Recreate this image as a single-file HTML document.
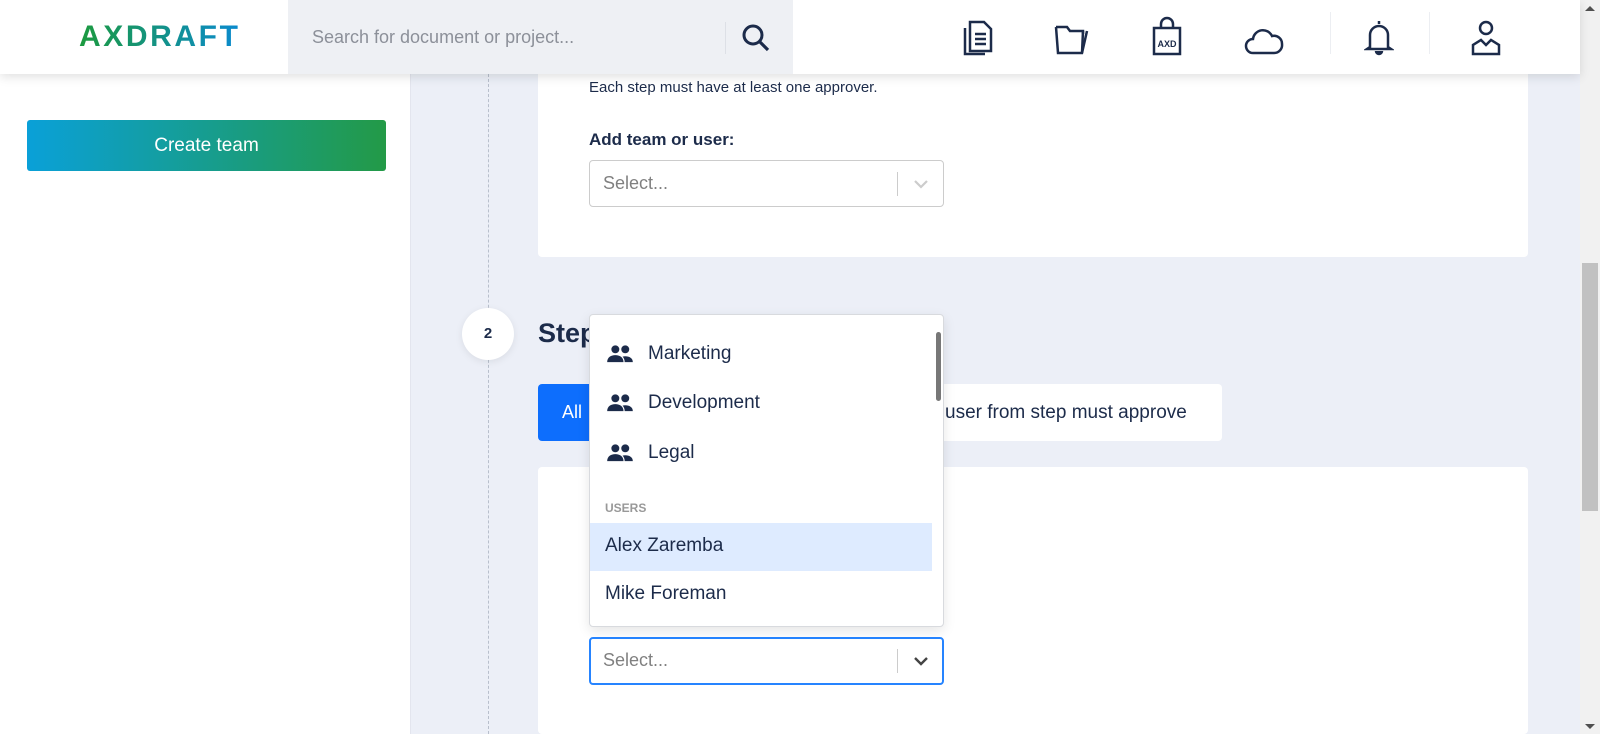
<!DOCTYPE html>
<html><head><meta charset="utf-8"><style>
*{box-sizing:border-box;margin:0;padding:0}
body{width:1600px;height:734px;overflow:hidden;background:#eceff7;font-family:"Liberation Sans",Arial,sans-serif;color:#1c2b4a;position:relative}
.abs{position:absolute}
.header{left:0;top:0;width:1580px;height:74px;background:#fff;box-shadow:0 3px 10px rgba(0,0,0,.12);z-index:5}
.logo{left:79px;top:20px;font-size:30px;font-weight:bold;letter-spacing:2.6px;background:linear-gradient(90deg,#1c9a3e,#0a8ad0);-webkit-background-clip:text;color:transparent}
.search{left:288px;top:0;width:505px;height:74px;background:#eef0f4}
.search span{position:absolute;left:24px;top:27px;font-size:18px;color:#8c9099}
.sidebar{left:0;top:0;width:411px;height:734px;background:#fff;border-right:1px solid #e3e5ee}
.btn{left:27px;top:120px;width:359px;height:51px;border-radius:3px;background:linear-gradient(90deg,#0aa0d8,#239a47);color:#fff;font-size:19px;text-align:center;line-height:51px}
.card{background:#fff;border-radius:4px}
.sel{background:#fff;border:1px solid #ccc;border-radius:4px}
.sel .ph{position:absolute;left:13px;top:12px;font-size:18px;color:#808080}
.sel .div{position:absolute;right:45px;top:11px;width:1px;height:24px;background:#ccc}
.item{position:absolute;left:0;width:100%;font-size:19px;color:#1c2b4a}
</style></head><body>
<div class="abs sidebar"></div>
<div class="abs btn">Create team</div>
<div class="abs" style="left:488px;top:74px;height:660px;border-left:1px dashed #b8bfcc"></div>

<div class="abs card" style="left:538px;top:60px;width:990px;height:197px"></div>
<div class="abs" style="left:589px;top:79px;font-size:15px;color:#1c2b4a">Each step must have at least one approver.</div>
<div class="abs" style="left:589px;top:130px;font-size:17px;font-weight:bold;color:#1c2b4a">Add team or user:</div>
<div class="abs sel" style="left:589px;top:160px;width:355px;height:47px"><span class="ph">Select...</span><span class="div"></span>
<svg class="abs" style="right:13px;top:16px" width="18" height="14" viewBox="0 0 18 14"><path d="M3 4l6 6 6-6" fill="none" stroke="#ccc" stroke-width="2.2"/></svg></div>

<div class="abs" style="left:462px;top:308px;width:52px;height:52px;border-radius:50%;background:#fff;box-shadow:0 2px 8px rgba(0,0,0,.08);text-align:center;line-height:52px;font-size:15px;font-weight:bold">2</div>
<div class="abs" style="left:538px;top:318px;font-size:27px;font-weight:bold">Step</div>
<div class="abs" style="left:538px;top:384px;width:684px;height:57px;background:#fff;border-radius:4px"></div>
<div class="abs" style="left:538px;top:384px;width:230px;height:57px;background:#0d6efd;border-radius:4px 0 0 4px;color:#fff;font-size:18px;line-height:57px;padding-left:24px">All</div>
<div class="abs" style="left:945px;top:402px;font-size:19px">user from step must approve</div>

<div class="abs card" style="left:538px;top:467px;width:990px;height:267px"></div>

<div class="abs" style="left:589px;top:314px;width:355px;height:313px;background:#fff;border:1px solid #d8dade;border-radius:4px;box-shadow:0 4px 12px rgba(0,0,0,.1)">
<div class="abs" style="right:2px;top:17px;width:5px;height:69px;background:#777;border-radius:3px"></div>
<div class="item" style="top:28px"><svg class="abs" style="left:16px;top:1px" width="28" height="20" viewBox="0 0 24 16"><circle cx="8" cy="4" r="3.4" fill="#1c2b4a"/><circle cx="16.5" cy="4" r="3.4" fill="#1c2b4a"/><path d="M1 15c0-4 3-6 7-6s7 2 7 6z" fill="#1c2b4a"/><path d="M16 15c0-2-.6-3.6-1.8-4.8 .7-.2 1.5-.3 2.3-.3 3.5 0 6.5 1.6 6.5 5.1z" fill="#1c2b4a"/></svg><span style="position:absolute;left:58px">Marketing</span></div>
<div class="item" style="top:77px"><svg class="abs" style="left:16px;top:1px" width="28" height="20" viewBox="0 0 24 16"><circle cx="8" cy="4" r="3.4" fill="#1c2b4a"/><circle cx="16.5" cy="4" r="3.4" fill="#1c2b4a"/><path d="M1 15c0-4 3-6 7-6s7 2 7 6z" fill="#1c2b4a"/><path d="M16 15c0-2-.6-3.6-1.8-4.8 .7-.2 1.5-.3 2.3-.3 3.5 0 6.5 1.6 6.5 5.1z" fill="#1c2b4a"/></svg><span style="position:absolute;left:58px">Development</span></div>
<div class="item" style="top:127px"><svg class="abs" style="left:16px;top:1px" width="28" height="20" viewBox="0 0 24 16"><circle cx="8" cy="4" r="3.4" fill="#1c2b4a"/><circle cx="16.5" cy="4" r="3.4" fill="#1c2b4a"/><path d="M1 15c0-4 3-6 7-6s7 2 7 6z" fill="#1c2b4a"/><path d="M16 15c0-2-.6-3.6-1.8-4.8 .7-.2 1.5-.3 2.3-.3 3.5 0 6.5 1.6 6.5 5.1z" fill="#1c2b4a"/></svg><span style="position:absolute;left:58px">Legal</span></div>
<div class="abs" style="left:15px;top:186px;font-size:12px;font-weight:bold;color:#999">USERS</div>
<div class="abs" style="left:0;top:208px;width:342px;height:48px;background:#deebff"></div>
<div class="item" style="top:220px;left:15px">Alex Zaremba</div>
<div class="item" style="top:268px;left:15px">Mike Foreman</div>
</div>

<div class="abs sel" style="left:589px;top:637px;width:355px;height:48px;border:2px solid #2684ff"><span class="ph" style="left:12px;top:11px">Select...</span><span class="div" style="right:44px;top:10px"></span>
<svg class="abs" style="right:12px;top:15px" width="18" height="14" viewBox="0 0 18 14"><path d="M3 4l6 6 6-6" fill="none" stroke="#444" stroke-width="2.4"/></svg></div>

<div class="abs header">
<div class="abs logo">AXDRAFT</div>
<div class="abs search"><span>Search for document or project...</span>
<div class="abs" style="left:437px;top:22px;width:1px;height:32px;background:#dde0e6"></div>
<svg class="abs" style="left:452px;top:22px" width="32" height="32" viewBox="0 0 32 32"><circle cx="13" cy="13" r="9" fill="none" stroke="#1c2b4a" stroke-width="3"/><path d="M20 20l8 8" stroke="#1c2b4a" stroke-width="3.2"/></svg></div>
<svg class="abs" style="left:962px;top:20px" width="34" height="36" viewBox="0 0 34 36" fill="none" stroke="#1c2b4a" stroke-width="2.5"><path d="M3 8v26h20"/><path d="M8 2h14l7 7v22H8z"/><path d="M13 14h11M13 19h11M13 24h11"/></svg>
<svg class="abs" style="left:1053px;top:22px" width="38" height="34" viewBox="0 0 38 34" fill="none" stroke="#1c2b4a" stroke-width="2.5"><path d="M3 5h11l3 4h13v3"/><path d="M3 5l2 26h24l5-22"/><path d="M30 9l-1 22"/></svg>
<svg class="abs" style="left:1150px;top:16px" width="34" height="40" viewBox="0 0 34 40" fill="none" stroke="#1c2b4a" stroke-width="2.5"><path d="M4 12h26v26H4z"/><path d="M11 12V8a6 6 0 0112 0v4"/><text x="17" y="31" font-size="9" font-weight="bold" fill="#1c2b4a" stroke="none" text-anchor="middle" font-family="Liberation Sans">AXD</text></svg>
<svg class="abs" style="left:1243px;top:26px" width="42" height="30" viewBox="0 0 42 30" fill="none" stroke="#1c2b4a" stroke-width="2.5"><path d="M10 27a7 7 0 010-14 10 10 0 0119-3 8 8 0 0110 8 8 8 0 01-8 9z"/></svg>
<div class="abs" style="left:1330px;top:12px;width:1px;height:42px;background:#eceef2"></div>
<svg class="abs" style="left:1364px;top:18px" width="30" height="38" viewBox="0 0 30 38" fill="none" stroke="#1c2b4a" stroke-width="2.5"><path d="M15 3v3"/><path d="M6 29V17a9 9 0 0118 0v12l3 2H3z"/><path d="M12 33a3 3 0 006 0" fill="#1c2b4a"/></svg>
<div class="abs" style="left:1429px;top:12px;width:1px;height:42px;background:#eceef2"></div>
<svg class="abs" style="left:1470px;top:18px" width="32" height="38" viewBox="0 0 32 38" fill="none" stroke="#1c2b4a" stroke-width="2.5"><circle cx="16" cy="10" r="6"/><path d="M3 36V27l8-5 5 5 5-5 8 5v9z"/></svg>
</div>

<div class="abs" style="left:1580px;top:0;width:20px;height:734px;background:#f1f1f1"></div>
<div class="abs" style="left:1582px;top:263px;width:16px;height:248px;background:#c1c1c1"></div>
<div class="abs" style="left:1585px;top:6px;border:5px solid transparent;border-bottom:5px solid #505050;border-top:0"></div>
<div class="abs" style="left:1585px;top:724px;border:5px solid transparent;border-top:5px solid #505050;border-bottom:0"></div>
</body></html>
